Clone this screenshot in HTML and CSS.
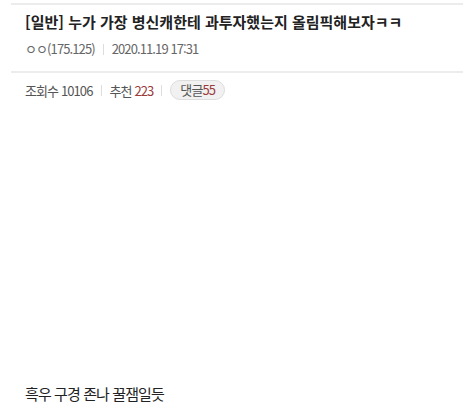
FILE: index.html
```html
<!DOCTYPE html>
<html lang="ko">
<head>
  <meta charset="UTF-8">
  <title>흑우 구경</title>
  <link rel="stylesheet" href="styles.css">
</head>
<body>
  <div class="post">
    <div class="post-head">
      <h2 class="title">[일반] 누가 가장 병신캐한테 과투자했는지 올림픽해보자ㅋㅋ</h2>
      <div class="meta">
        <span class="writer">ㅇㅇ(175.125)</span>
        <span class="bar"></span>
        <span class="date">2020.11.19 17:31</span>
      </div>
    </div>
    <div class="stats">
      <span>조회수 10106</span>
      <span class="bar"></span>
      <span>추천 <em>223</em></span>
      <span class="bar"></span>
      <span class="reply">댓글<em>55</em></span>
    </div>
    <div class="content">
      <p>흑우 구경 존나 꿀잼일듯</p>
    </div>
  </div>
</body>
</html>
```

FILE: styles.css
```css
body {
  margin: 0;
  font-family: "Noto Sans CJK KR", "Noto Sans", sans-serif;
  background: #fff;
  color: #333;
}
.post {
  padding: 3px 11px 0;
}
.post-head {
  border-top: 2px solid #ececec;
  border-bottom: 2px solid #ececec;
  padding: 6px 14px 12px;
}
.title {
  margin: 0;
  font-size: 15px;
  font-weight: bold;
  color: #222;
  line-height: 22px;
}
.meta {
  display: flex;
  align-items: center;
  gap: 8px;
  margin-top: 6px;
  font-size: 13px;
  letter-spacing: -0.9px;
  color: #666;
  line-height: 20px;
}
.bar {
  width: 1px;
  height: 11px;
  background: #ddd;
}
.stats {
  display: flex;
  align-items: center;
  gap: 8px;
  padding: 7px 14px 0;
  font-size: 13px;
  letter-spacing: -0.9px;
  color: #555;
}
.stats em {
  font-style: normal;
  color: #9b3b3b;
}
.reply {
  background: #f1f1f1;
  border: 1px solid #ddd;
  border-radius: 10px;
  padding: 0 9px;
  line-height: 18px;
}
.content {
  padding: 283px 14px 0;
  font-size: 15px;
  letter-spacing: -0.9px;
  color: #222;
}
.content p {
  margin: 0;
}
```
